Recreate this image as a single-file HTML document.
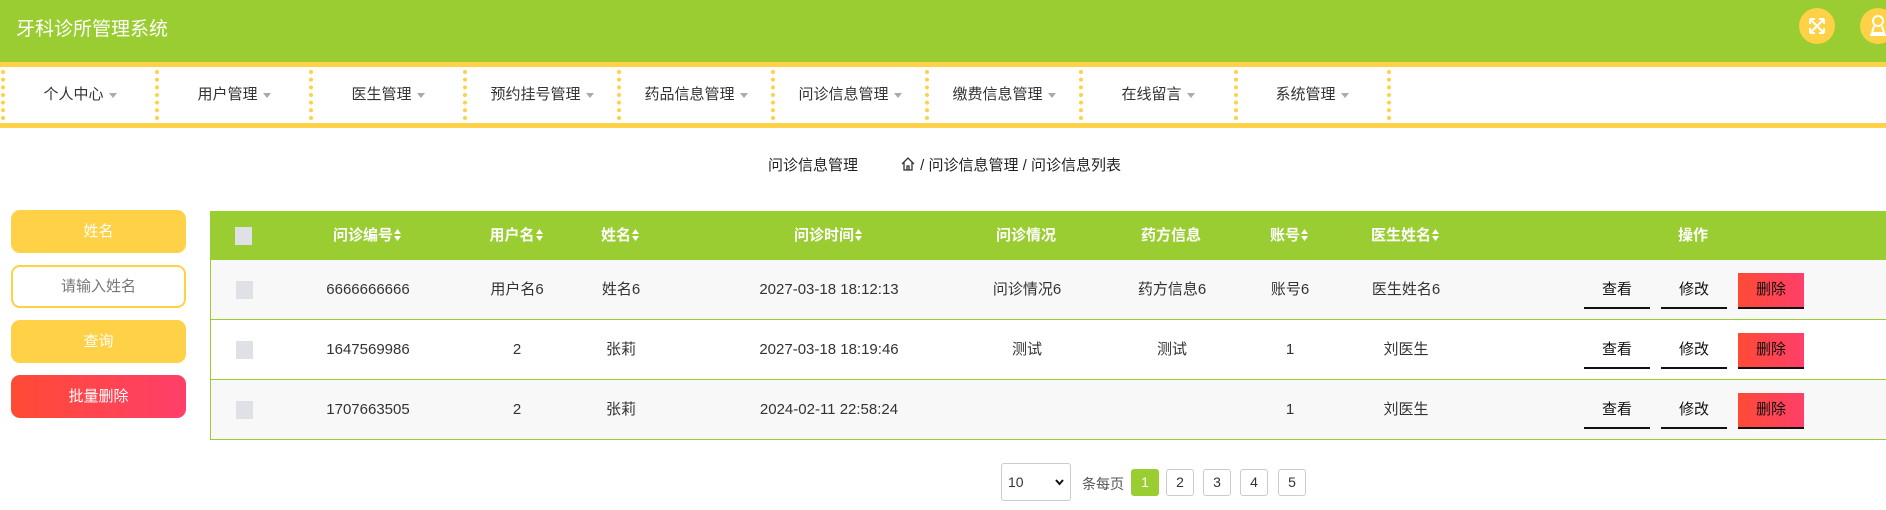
<!DOCTYPE html>
<html><head><meta charset="utf-8"><style>
*{margin:0;padding:0;box-sizing:border-box}
body{width:1886px;height:510px;overflow:hidden;background:#fff;font-family:"Liberation Sans","Noto Sans CJK SC",sans-serif;color:#333;position:relative}
.top{position:absolute;left:0;top:0;width:1886px;height:62px;background:#9acd32}
.title{position:absolute;left:16px;top:14px;color:#fff;font-size:19px}
.circ{position:absolute;top:8px;width:36px;height:36px;border-radius:50%;background:#ffd146}
.nav{position:absolute;left:0;top:62px;width:1886px;height:66px;border-top:5px solid #ffd146;border-bottom:5px solid #ffd146;background:#fff}
.sep{position:absolute;top:3px;height:50px;border-left:4px dotted #ffd146}
.ni{position:absolute;top:16px;width:154px;text-align:center;font-size:15px;color:#333}
.ni:after{content:"";display:inline-block;margin-left:5px;vertical-align:middle;border:4px solid transparent;border-top:5px solid #aaa;border-bottom:0}
.bc{position:absolute;top:154px;font-size:15px;color:#222}
.lb{position:absolute;left:11px;width:175px;height:43px;border-radius:9px;color:#fff;font-size:15px;text-align:center;line-height:43px}
.hd{position:absolute;left:210px;top:211px;width:1676px;height:49px;background:#9acd32}
.row{position:absolute;left:210px;width:1676px;height:60px;border-left:1px solid #9acd32;border-bottom:1px solid #9acd32}
.c{position:absolute;width:240px;height:22px;line-height:22px;text-align:center;font-size:15px;white-space:nowrap}
.hd .c{top:14px;color:#fff;font-weight:bold}
.row .c{top:19px}
.cb{position:absolute;left:25px;width:17px;height:18px;background:#dfe1e6}
.hd .cb{top:16px}.row .cb{top:21px}
.s{margin-left:1px;vertical-align:-1px}
.b{position:absolute;top:13px;width:66px;height:36px;line-height:34px;border-bottom:2px solid #111;color:#111;font-size:15px;text-align:center}
.d{background:linear-gradient(90deg,#ff4a35,#ff3f6a)}
.pg{position:absolute;top:469px;width:28px;height:27px;border:1px solid #ccc;border-radius:3px;text-align:center;line-height:25px;font-size:14px}
</style></head><body>
<div class="top"><div class="title">牙科诊所管理系统</div>
<div class="circ" style="left:1799px"><svg width="36" height="36" viewBox="0 0 36 36" fill="none" stroke="#fff" stroke-width="2"><path d="M12 12l12 12M24 12L12 24M11 11h5M11 11v5M25 11h-5M25 11v5M11 25h5M11 25v-5M25 25h-5M25 25v-5"/></svg></div>
<div class="circ" style="left:1860px"><svg width="36" height="36" viewBox="0 0 36 36" fill="none" stroke="#fff" stroke-width="2"><circle cx="18" cy="13" r="5"/><path d="M14 18l-2 7h12l-2-7M10 27h16"/></svg></div>
</div>
<div class="nav">
<div class="sep" style="left:1px"></div><div class="sep" style="left:155px"></div><div class="sep" style="left:309px"></div><div class="sep" style="left:463px"></div><div class="sep" style="left:617px"></div><div class="sep" style="left:771px"></div><div class="sep" style="left:925px"></div><div class="sep" style="left:1079px"></div><div class="sep" style="left:1234px"></div><div class="sep" style="left:1387px"></div>
<div class="ni" style="left:3px">个人中心</div><div class="ni" style="left:157px">用户管理</div><div class="ni" style="left:311px">医生管理</div><div class="ni" style="left:465px">预约挂号管理</div><div class="ni" style="left:619px">药品信息管理</div><div class="ni" style="left:773px">问诊信息管理</div><div class="ni" style="left:927px">缴费信息管理</div><div class="ni" style="left:1081px">在线留言</div><div class="ni" style="left:1235px">系统管理</div>
</div>
<div class="bc" style="left:768px">问诊信息管理</div>
<div class="bc" style="left:900px"><svg width="16" height="16" viewBox="0 0 16 16" fill="none" stroke="#333" stroke-width="1.3" style="vertical-align:-2px"><path d="M2 8L8 2l6 6M4 6v8h8V6M7 14v-4h2v4"/></svg> / 问诊信息管理 / 问诊信息列表</div>
<div class="lb" style="top:210px;background:#ffd146">姓名</div>
<div class="lb" style="top:265px;background:#fff;border:2px solid #ffd146;color:#777;line-height:39px">请输入姓名</div>
<div class="lb" style="top:320px;background:#ffd146">查询</div>
<div class="lb" style="top:375px;background:linear-gradient(90deg,#ff4a35,#ff3f6a)">批量删除</div>

<div class="hd"><span class="cb"></span>
<div class="c" style="left:37px">问诊编号<svg class="s" width="7" height="12" viewBox="0 0 7 12"><path d="M0 5L3.5 0 7 5zM0 7l3.5 5L7 7z" fill="#fff"/></svg></div>
<div class="c" style="left:186px">用户名<svg class="s" width="7" height="12" viewBox="0 0 7 12"><path d="M0 5L3.5 0 7 5zM0 7l3.5 5L7 7z" fill="#fff"/></svg></div>
<div class="c" style="left:290px">姓名<svg class="s" width="7" height="12" viewBox="0 0 7 12"><path d="M0 5L3.5 0 7 5zM0 7l3.5 5L7 7z" fill="#fff"/></svg></div>
<div class="c" style="left:498px">问诊时间<svg class="s" width="7" height="12" viewBox="0 0 7 12"><path d="M0 5L3.5 0 7 5zM0 7l3.5 5L7 7z" fill="#fff"/></svg></div>
<div class="c" style="left:696px">问诊情况</div>
<div class="c" style="left:841px">药方信息</div>
<div class="c" style="left:959px">账号<svg class="s" width="7" height="12" viewBox="0 0 7 12"><path d="M0 5L3.5 0 7 5zM0 7l3.5 5L7 7z" fill="#fff"/></svg></div>
<div class="c" style="left:1075px">医生姓名<svg class="s" width="7" height="12" viewBox="0 0 7 12"><path d="M0 5L3.5 0 7 5zM0 7l3.5 5L7 7z" fill="#fff"/></svg></div>
<div class="c" style="left:1363px">操作</div>
</div>

<div class="row" style="top:260px;background:#f8f8f8"><span class="cb"></span>
<div class="c" style="left:37px">6666666666</div><div class="c" style="left:186px">用户名6</div><div class="c" style="left:290px">姓名6</div><div class="c" style="left:498px">2027-03-18 18:12:13</div><div class="c" style="left:696px">问诊情况6</div><div class="c" style="left:841px">药方信息6</div><div class="c" style="left:959px">账号6</div><div class="c" style="left:1075px">医生姓名6</div>
<div class="b" style="left:1373px">查看</div><div class="b" style="left:1450px">修改</div><div class="b d" style="left:1527px">删除</div></div>
<div class="row" style="top:320px;background:#fff"><span class="cb"></span>
<div class="c" style="left:37px">1647569986</div><div class="c" style="left:186px">2</div><div class="c" style="left:290px">张莉</div><div class="c" style="left:498px">2027-03-18 18:19:46</div><div class="c" style="left:696px">测试</div><div class="c" style="left:841px">测试</div><div class="c" style="left:959px">1</div><div class="c" style="left:1075px">刘医生</div>
<div class="b" style="left:1373px">查看</div><div class="b" style="left:1450px">修改</div><div class="b d" style="left:1527px">删除</div></div>
<div class="row" style="top:380px;background:#f8f8f8"><span class="cb"></span>
<div class="c" style="left:37px">1707663505</div><div class="c" style="left:186px">2</div><div class="c" style="left:290px">张莉</div><div class="c" style="left:498px">2024-02-11 22:58:24</div><div class="c" style="left:959px">1</div><div class="c" style="left:1075px">刘医生</div>
<div class="b" style="left:1373px">查看</div><div class="b" style="left:1450px">修改</div><div class="b d" style="left:1527px">删除</div></div>

<div style="position:absolute;left:1001px;top:463px;width:70px;height:38px;border:1px solid #ccc;border-radius:3px;font-size:14px;line-height:36px;padding-left:6px">10<svg style="position:absolute;right:6px;top:15px" width="9" height="7" viewBox="0 0 9 7"><path d="M1 1l3.5 4L8 1" fill="none" stroke="#111" stroke-width="2"/></svg></div>
<div style="position:absolute;left:1082px;top:474px;font-size:14px;color:#555">条每页</div>
<div class="pg" style="left:1131px;background:#9acd32;border-color:#9acd32;color:#fff">1</div>
<div class="pg" style="left:1166px">2</div><div class="pg" style="left:1203px">3</div><div class="pg" style="left:1240px">4</div><div class="pg" style="left:1278px">5</div>
</body></html>
